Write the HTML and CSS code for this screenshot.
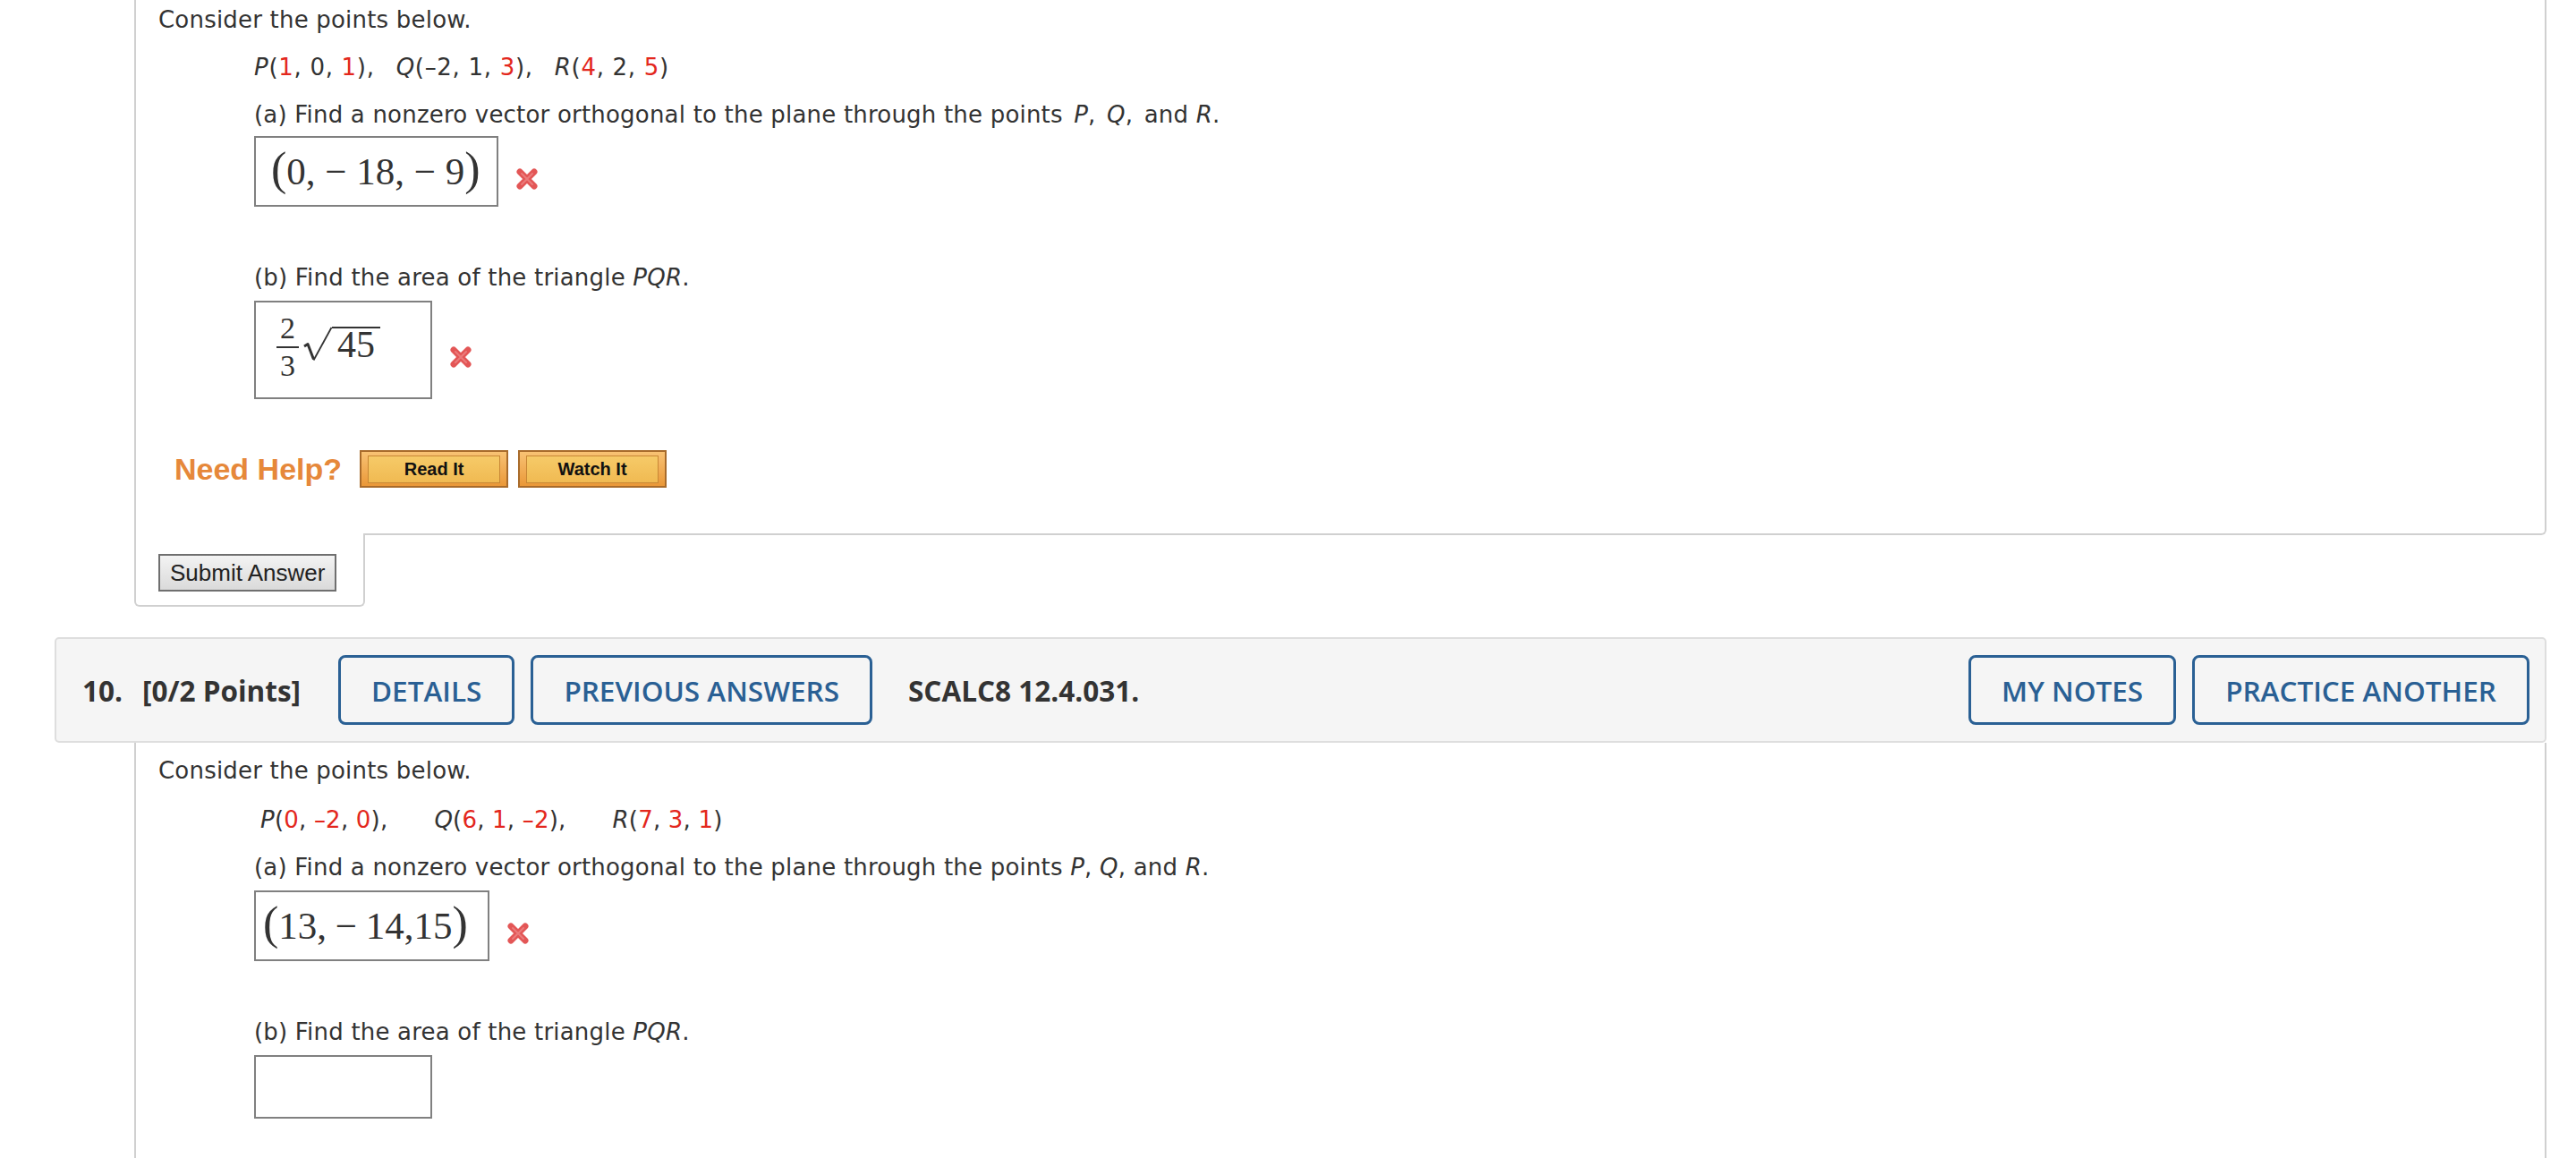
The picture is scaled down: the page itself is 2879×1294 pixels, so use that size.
FILE: index.html
```html
<!DOCTYPE html>
<html lang="en">
<head>
<meta charset="utf-8">
<title>Question</title>
<link rel="stylesheet" href="styles.css">
</head>
<body>
<div class="page">
  <section class="question">
    <div class="qbody qbody-top">
      <p class="line">Consider the points below.</p>
      <p class="line indent pts pts-top"><span class="pt"><i>P</i>(<span class="red">1</span>, 0, <span class="red">1</span>),</span><span class="pt"><i>Q</i>(–2, 1, <span class="red">3</span>),</span><span class="pt"><i>R</i>(<span class="red">4</span>, 2, <span class="red">5</span>)</span></p>
      <p class="line indent part">(a) Find a nonzero vector orthogonal to the plane through the points <span class="sp"><i>P</i>,</span> <span class="sp"><i>Q</i>,</span> <span class="sp">and</span> <i>R</i>.</p>
      <div class="indent answer-row">
        <div class="ans ans-vec ans-vec-1"><span class="paren">(</span>0, − 18, − 9<span class="paren">)</span></div>
        <svg class="xmark" viewBox="0 0 26 26" width="26" height="26"><path d="M5 5L21 21M21 5L5 21" stroke="#e35656" stroke-width="7" stroke-linecap="round" fill="none"/><path d="M7 7L19 19M19 7L7 19" stroke="#f39a9a" stroke-width="2" stroke-linecap="round" fill="none" opacity=".55"/></svg>
      </div>
      <p class="line indent part part-b">(b) Find the area of the triangle <i>PQR</i>.</p>
      <div class="indent answer-row answer-row-b">
        <div class="ans ans-frac">
          <div class="frac"><span class="num">2</span><span class="bar"></span><span class="den">3</span></div>
          <div class="sqrt">
            <svg viewBox="0 0 32 40" width="32" height="40"><path d="M1 22L5 19.5L11.5 36.5" stroke="#333" stroke-width="3" fill="none" stroke-linejoin="round"/><path d="M11.5 37.5L31.5 1" stroke="#333" stroke-width="1.8" fill="none"/></svg>
            <span class="radicand">45</span>
          </div>
        </div>
        <svg class="xmark" viewBox="0 0 26 26" width="26" height="26"><path d="M5 5L21 21M21 5L5 21" stroke="#e35656" stroke-width="7" stroke-linecap="round" fill="none"/><path d="M7 7L19 19M19 7L7 19" stroke="#f39a9a" stroke-width="2" stroke-linecap="round" fill="none" opacity=".55"/></svg>
      </div>
      <div class="help">
        <span class="need">Need Help?</span>
        <span class="hbtn"><span>Read It</span></span>
        <span class="hbtn"><span>Watch It</span></span>
      </div>
    </div>
    <div class="submit-tab"><button class="submit" type="button">Submit Answer</button></div>
  </section>

  <header class="qhead">
    <span class="qnum">10.</span>
    <span class="qpts">[0/2 Points]</span>
    <span class="obtn obtn-first">DETAILS</span>
    <span class="obtn">PREVIOUS ANSWERS</span>
    <span class="qcode">SCALC8 12.4.031.</span>
    <span class="spacer"></span>
    <span class="obtn">MY NOTES</span>
    <span class="obtn">PRACTICE ANOTHER</span>
  </header>

  <section class="question">
    <div class="qbody qbody-bottom">
      <p class="line">Consider the points below.</p>
      <p class="line indent pts pts-wide"><span class="pt"><i>P</i>(<span class="red">0</span>, <span class="red">–2</span>, <span class="red">0</span>),</span><span class="pt"><i>Q</i>(<span class="red">6</span>, <span class="red">1</span>, <span class="red">–2</span>),</span><span class="pt"><i>R</i>(<span class="red">7</span>, <span class="red">3</span>, <span class="red">1</span>)</span></p>
      <p class="line indent part">(a) Find a nonzero vector orthogonal to the plane through the points <i>P</i>, <i>Q</i>, and <i>R</i>.</p>
      <div class="indent answer-row answer-row-b">
        <div class="ans ans-vec ans-vec-2"><span class="paren">(</span>13, − 14,15<span class="paren">)</span></div>
        <svg class="xmark" viewBox="0 0 26 26" width="26" height="26"><path d="M5 5L21 21M21 5L5 21" stroke="#e35656" stroke-width="7" stroke-linecap="round" fill="none"/><path d="M7 7L19 19M19 7L7 19" stroke="#f39a9a" stroke-width="2" stroke-linecap="round" fill="none" opacity=".55"/></svg>
      </div>
      <p class="line indent part part-b">(b) Find the area of the triangle <i>PQR</i>.</p>
      <div class="indent answer-row answer-row-b">
        <div class="ans ans-empty"></div>
      </div>
    </div>
  </section>
</div>
</body>
</html>
```

FILE: styles.css
```css
html, body {
  margin: 0;
  padding: 0;
  background: #ffffff;
}
body {
  height: 1294px;
  overflow: hidden;
  font-family: "DejaVu Sans", Verdana, sans-serif;
  font-size: 26px;
  letter-spacing: 0.2px;
  color: #333333;
}
.page {
  margin-left: 61px;
  width: 2785px;
}
.question {
  margin-left: 89px;
}
.qbody {
  border-left: 2px solid #d0d0d0;
  border-right: 2px solid #d0d0d0;
  padding-left: 25px;
}
.qbody-top {
  padding-top: 6px;
  padding-bottom: 51px;
  border-bottom: 2px solid #d0d0d0;
  border-bottom-right-radius: 6px;
}
.qbody-bottom {
  padding-top: 15px;
  height: 520px;
}
.line {
  margin: 0;
  line-height: 32px;
  white-space: nowrap;
}
.indent {
  margin-left: 107px;
}
.pts {
  margin-top: 21px;
}
.pts-top {
  letter-spacing: 0.7px;
}
.pts-top .pt + .pt {
  margin-left: 24px;
}
.pts-wide {
  margin-top: 23px;
  padding-left: 7px;
}
.pts-wide .pt + .pt {
  margin-left: 52px;
}
.red {
  color: #e3271d;
}
.sp {
  margin-left: 4px;
}
.part {
  margin-top: 21px;
}
.part-b {
  margin-top: 63px;
}
.answer-row {
  display: flex;
  align-items: center;
  margin-top: 8px;
}
.answer-row-b {
  margin-top: 10px;
}
.ans {
  box-sizing: border-box;
  border: 2px solid #808080;
  background: #ffffff;
  font-family: "Liberation Serif", "Times New Roman", serif;
  letter-spacing: 0;
  color: #333333;
}
.ans-vec {
  height: 79px;
  line-height: 75px;
  font-size: 43px;
  white-space: pre;
}
.ans-vec-1 {
  padding: 0 18px 0 17px;
}
.ans-vec-2 {
  padding: 0 22px 0 8px;
  word-spacing: -1px;
}
.paren {
  font-size: 52px;
  line-height: 0;
}
.xmark {
  display: block;
  margin-left: 19px;
  margin-top: 16px;
}
.ans-frac {
  width: 199px;
  height: 110px;
  display: flex;
  align-items: flex-start;
  padding-left: 23px;
}
.frac {
  display: flex;
  flex-direction: column;
  align-items: center;
  margin-top: 12px;
  font-size: 34px;
}
.num, .den {
  line-height: 34px;
}
.num {
  padding-bottom: 3px;
}
.den {
  padding-top: 3px;
}
.bar {
  width: 25px;
  height: 2px;
  background: #333333;
}
.sqrt {
  display: flex;
  align-items: flex-start;
  margin-left: 5px;
  margin-top: 27px;
}
.sqrt svg {
  display: block;
}
.radicand {
  border-top: 2px solid #333333;
  font-size: 42px;
  line-height: 36px;
  padding: 0 6px 0 6px;
}
.ans-empty {
  width: 199px;
  height: 71px;
}
.help {
  display: flex;
  align-items: center;
  margin-top: 57px;
  margin-left: 18px;
}
.need {
  font-family: "Liberation Sans", Arial, sans-serif;
  font-weight: bold;
  font-size: 34px;
  letter-spacing: 0;
  color: #e6883a;
  margin-right: 20px;
}
.hbtn {
  box-sizing: border-box;
  display: block;
  width: 166px;
  height: 42px;
  border: 2px solid #a86b2b;
  padding: 4px 7px 3px;
  background: linear-gradient(#f8c274, #ea9838);
}
.hbtn + .hbtn {
  margin-left: 11px;
}
.hbtn span {
  box-sizing: border-box;
  display: flex;
  align-items: center;
  justify-content: center;
  height: 100%;
  border: 1px solid #c88735;
  background: linear-gradient(#f6ca68, #f0ba52);
  font-family: "Liberation Sans", Arial, sans-serif;
  font-weight: bold;
  font-size: 20px;
  letter-spacing: 0;
  color: #111111;
}
.submit-tab {
  box-sizing: border-box;
  width: 258px;
  margin-top: -2px;
  background: #ffffff;
  border: 2px solid #d0d0d0;
  border-top: none;
  border-radius: 0 0 6px 6px;
  padding: 23px 0 15px 25px;
}
.submit {
  display: block;
  box-sizing: border-box;
  height: 42px;
  margin: 0;
  padding: 0 11px;
  border: 2px solid #6f6f6f;
  border-radius: 0;
  background: linear-gradient(#f3f3f3, #dadada);
  font-family: "Liberation Sans", Arial, sans-serif;
  font-size: 26px;
  color: #222222;
}
.qhead {
  box-sizing: border-box;
  margin-top: 34px;
  height: 118px;
  background: #f5f5f5;
  border: 2px solid #dedede;
  border-radius: 5px;
  display: flex;
  align-items: center;
  padding: 0 17px 0 29px;
  font-family: "Open Sans", sans-serif;
  font-size: 31.5px;
  letter-spacing: 0;
  color: #333333;
  white-space: nowrap;
}
.qnum, .qpts, .qcode {
  font-weight: 700;
}
.qpts {
  margin-left: 22px;
}
.obtn {
  box-sizing: border-box;
  display: flex;
  align-items: center;
  height: 78px;
  padding: 0 34px;
  border: 3px solid #2a6094;
  border-radius: 8px;
  color: #2a6094;
  font-weight: 600;
}
.obtn + .obtn {
  margin-left: 18px;
}
.obtn-first {
  margin-left: 42px;
}
.qcode {
  margin-left: 40px;
}
.spacer {
  flex: 1;
}
```
